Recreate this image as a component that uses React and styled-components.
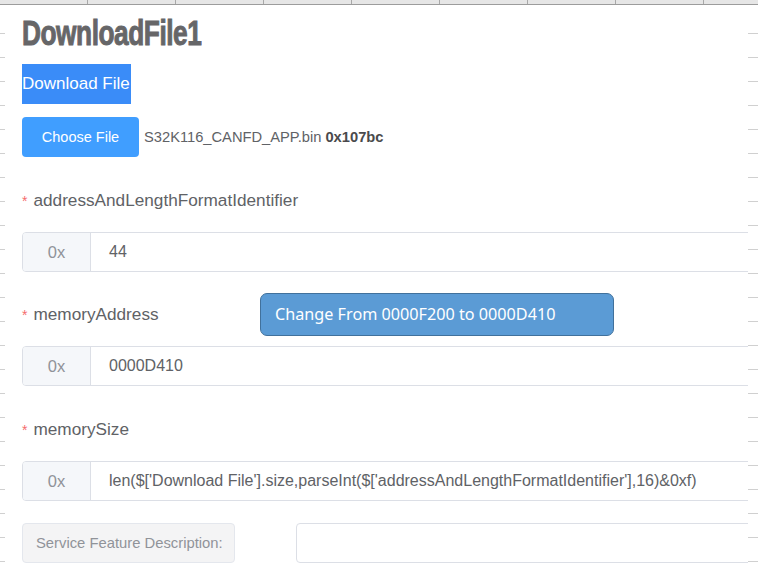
import React from 'react';
import styled, { createGlobalStyle } from 'styled-components';

const GlobalStyle = createGlobalStyle`
  html, body {
    margin: 0;
    padding: 0;
    background: #ffffff;
  }
  body {
    font-family: "Liberation Sans", Arial, sans-serif;
  }
`;

// whole sheet window
const Sheet = styled.div`
  width: 758px;
  height: 580px;
  overflow: hidden;
  display: flex;
  flex-direction: column;
  background: #ffffff;
`;

// column header strip, mostly cut off
const HeaderStrip = styled.div`
  height: 4px;
  flex: none;
  border-bottom: 1px solid #9c9c9c;
  background:
    repeating-linear-gradient(
      to right,
      transparent 0,
      transparent 87px,
      #a8a8a8 87px,
      #a8a8a8 88px
    ),
    #e6e6e6;
`;

const Body = styled.div`
  flex: 1;
  display: grid;
  grid-template-columns: 5px 1fr 10px;
  min-height: 0;
`;

// row lines that peek out around the picture
const Gutter = styled.div`
  background: repeating-linear-gradient(
    to bottom,
    transparent 0,
    transparent 23px,
    #d0d0d0 23px,
    #d0d0d0 24px
  );
  background-position: 0 5px;
`;

const Content = styled.div`
  overflow: hidden;
  padding-left: 17px;
  min-width: 0;
`;

const Title = styled.h1`
  margin: 8px 0 0;
  height: 40px;
  line-height: 40px;
  font-size: 35px;
  font-weight: 700;
  letter-spacing: -0.6px;
  color: #666668;
  -webkit-text-stroke: 1px #666668;
  white-space: nowrap;
  transform: scaleX(0.75);
  transform-origin: left center;
`;

const DownloadButton = styled.div`
  margin-top: 11px;
  width: 109px;
  height: 40px;
  line-height: 40px;
  background: #3a8cf8;
  color: #ffffff;
  font-size: 17px;
  white-space: nowrap;
`;

const FileRow = styled.div`
  margin: 13px 0 0.5px;
  display: flex;
  align-items: center;
  font-size: 14.7px;
  color: #606266;
`;

const ChooseButton = styled.div`
  width: 117px;
  height: 40px;
  line-height: 40px;
  border-radius: 4px;
  background: #409eff;
  color: #ffffff;
  text-align: center;
  font-size: 14.5px;
  margin-right: 5px;
`;

const FileSize = styled.b`
  margin-left: 4px;
  color: #4a4a4c;
`;

const FormItem = styled.div`
  position: relative;
  margin-top: 22.5px;
`;

const Label = styled.div`
  height: 40px;
  line-height: 40px;
  padding-bottom: 12px;
  font-size: 17.2px;
  color: #606266;
  white-space: nowrap;
`;

const Star = styled.span`
  color: #f56c6c;
  font-size: 14px;
  margin-right: 6px;
`;

const InputGroup = styled.div`
  display: flex;
  width: calc(100% + 12px);
  height: 40px;
  box-sizing: border-box;
  border: 1px solid #dcdfe6;
  border-radius: 4px;
  overflow: hidden;
`;

const Prepend = styled.div`
  flex: none;
  width: 67px;
  background: #f5f7fa;
  border-right: 1px solid #dcdfe6;
  color: #909399;
  font-size: 16.5px;
  line-height: 38px;
  text-align: center;
`;

const InputText = styled.div`
  flex: 1;
  padding-left: 18px;
  line-height: 38px;
  font-size: 16px;
  color: #606266;
  white-space: nowrap;
`;

// annotation bubble laid over the form
const Callout = styled.div`
  position: absolute;
  left: 238px;
  top: -1px;
  width: 354px;
  height: 43px;
  box-sizing: border-box;
  padding-left: 14px;
  line-height: 41px;
  background: #5b9bd5;
  border: 1px solid #41719c;
  border-radius: 7px;
  color: #ffffff;
  font-family: "Noto Sans", "Open Sans", sans-serif;
  font-size: 16.2px;
  white-space: nowrap;
`;

const ServiceRow = styled.div`
  margin-top: 22.5px;
  display: flex;
  gap: 61px;
`;

const ServiceLabel = styled.div`
  flex: none;
  width: 213px;
  height: 40px;
  box-sizing: border-box;
  padding-left: 13px;
  line-height: 38px;
  background: #f4f4f5;
  border: 1px solid #e4e7ed;
  border-radius: 4px;
  color: #909399;
  font-size: 14.8px;
  white-space: nowrap;
`;

const ServiceInput = styled.div`
  flex: 1;
  height: 40px;
  margin-right: -12px;
  box-sizing: border-box;
  border: 1px solid #dcdfe6;
  border-radius: 4px;
`;

const fields = [
  { name: 'addressAndLengthFormatIdentifier', value: '44' },
  { name: 'memoryAddress', value: '0000D410', note: 'Change From 0000F200 to 0000D410' },
  {
    name: 'memorySize',
    value: "len($['Download File'].size,parseInt($['addressAndLengthFormatIdentifier'],16)&0xf)",
  },
];

const App = () => {
  return (
    <>
      <GlobalStyle />
      <Sheet>
        <HeaderStrip />
        <Body>
          <Gutter />
          <Content>
            <Title>DownloadFile1</Title>
            <DownloadButton>Download File</DownloadButton>
            <FileRow>
              <ChooseButton>Choose File</ChooseButton>
              S32K116_CANFD_APP.bin
              <FileSize>0x107bc</FileSize>
            </FileRow>

            {fields.map((f) => (
              <FormItem key={f.name}>
                <Label>
                  <Star>*</Star>
                  {f.name}
                </Label>
                {f.note && <Callout>{f.note}</Callout>}
                <InputGroup>
                  <Prepend>0x</Prepend>
                  <InputText>{f.value}</InputText>
                </InputGroup>
              </FormItem>
            ))}

            <ServiceRow>
              <ServiceLabel>Service Feature Description:</ServiceLabel>
              <ServiceInput />
            </ServiceRow>
          </Content>
          <Gutter />
        </Body>
      </Sheet>
    </>
  );
};

export default App;
